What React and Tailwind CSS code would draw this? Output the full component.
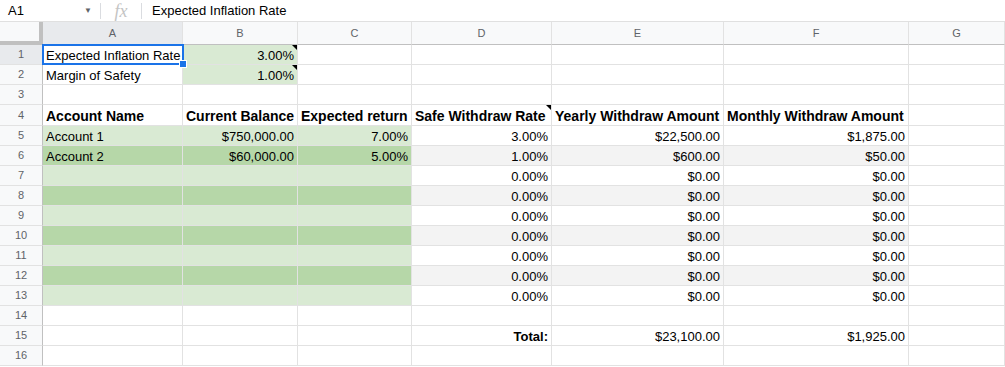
const cols = ["A", "B", "C", "D", "E", "F", "G"];
const widths = "grid-cols-[43px_140px_115px_114px_140px_172px_185px_1fr]";

const light = "bg-[#d9ead3]";
const dark = "bg-[#b6d7a8]";

function cellsFor(r) {
  // one entry per column A..G
  const empty = () => ({ text: "", align: "left", bold: false, bg: "", note: false });
  const row = cols.map(empty);
  if (r === 1) {
    row[0].text = "Expected Inflation Rate";
    row[1] = { text: "3.00%", align: "right", bg: light, note: true };
  }
  if (r === 2) {
    row[0].text = "Margin of Safety";
    row[1] = { text: "1.00%", align: "right", bg: light, note: true };
  }
  if (r === 4) {
    const h = ["Account Name", "Current Balance", "Expected return", "Safe Withdraw Rate", "Yearly Withdraw Amount", "Monthly Withdraw Amount"];
    h.forEach((t, i) => {
      row[i] = { text: t, align: "left", bold: true, big: true, bg: "", note: i === 3 };
    });
  }
  if (r >= 5 && r <= 13) {
    const green = r % 2 === 1 ? light : dark;
    const grey = r % 2 === 0 ? "bg-[#f3f3f3]" : "";
    row[0] = { text: "", align: "left", bg: green };
    row[1] = { text: "", align: "right", bg: green };
    row[2] = { text: "", align: "right", bg: green };
    row[3] = { text: "0.00%", align: "right", bg: grey };
    row[4] = { text: "$0.00", align: "right", bg: grey };
    row[5] = { text: "$0.00", align: "right", bg: grey };
    if (r === 5) {
      row[0].text = "Account 1";
      row[1].text = "$750,000.00";
      row[2].text = "7.00%";
      row[3].text = "3.00%";
      row[4].text = "$22,500.00";
      row[5].text = "$1,875.00";
    }
    if (r === 6) {
      row[0].text = "Account 2";
      row[1].text = "$60,000.00";
      row[2].text = "5.00%";
      row[3].text = "1.00%";
      row[4].text = "$600.00";
      row[5].text = "$50.00";
    }
  }
  if (r === 15) {
    row[3] = { text: "Total:", align: "right", bold: true, bg: "" };
    row[4] = { text: "$23,100.00", align: "right", bg: "" };
    row[5] = { text: "$1,925.00", align: "right", bg: "" };
  }
  return row;
}

function Cell({ c, h }) {
  return (
    <div
      className={`relative ${h} border-r border-b border-[#e2e2e2] px-[3px] pb-[2px] flex items-end overflow-hidden whitespace-nowrap text-black ${c.big ? "text-[14px]" : "text-[13px]"} ${c.bg || "bg-white"} ${c.align === "right" ? "justify-end" : "justify-start"} ${c.bold ? "font-bold" : ""}`}
    >
      <span className="leading-none">{c.text}</span>
      {c.note && (
        <span className="absolute top-0 right-0 w-0 h-0 border-t-[5px] border-l-[5px] border-t-black border-l-transparent" />
      )}
    </div>
  );
}

export default function App() {
  const rows = Array.from({ length: 16 }, (_, i) => i + 1);
  return (
    <div className="w-[1005px] h-[367px] overflow-hidden bg-white font-['Liberation_Sans',Arial,sans-serif]">
      {/* formula bar */}
      <div className="h-[22px] flex items-center border-b border-[#e0e0e0] text-[13px] text-black">
        <div className="w-[100px] flex items-center justify-between pl-2 pr-[8px]">
          <span>A1</span>
          <span className="text-[8px] text-[#5f6368]">▼</span>
        </div>
        <div className="w-px h-[16px] bg-[#dadce0]" />
        <div className="w-[40px] text-center text-[18px] italic text-[#c4c4c4] font-['Liberation_Serif',serif] leading-none">fx</div>
        <div className="w-px h-[16px] bg-[#dadce0]" />
        <span className="pl-[10px]">Expected Inflation Rate</span>
      </div>

      <div className={`relative grid ${widths}`}>
        {/* column header */}
        <div className="h-[23px] bg-[#f8f9fa] border-r-[4px] border-b-[4px] border-[#c0c0c0]" />
        {cols.map((l, i) => (
          <div
            key={l}
            className={`h-[23px] border-r border-b border-[#c0c0c0] border-r-[#e2e2e2] flex items-center justify-center text-[11px] text-[#5f6368] ${i === 0 ? "bg-[#e8eaed]" : "bg-[#f8f9fa]"}`}
          >
            {l}
          </div>
        ))}

        {rows.map((r) => {
          const h = r === 4 ? "h-[21px]" : "h-5";
          return [
            <div
              key={"h" + r}
              className={`${h} border-r border-b border-[#c0c0c0] border-b-[#e2e2e2] flex items-center justify-center text-[11px] text-[#5f6368] ${r === 1 ? "bg-[#e8eaed]" : "bg-[#f8f9fa]"}`}
            >
              {r}
            </div>,
            ...cellsFor(r).map((c, i) => <Cell key={r + "-" + i} c={c} h={h} />),
          ];
        })}

        {/* A1 selection */}
        <div className="absolute left-[42px] top-[22px] w-[142px] h-[21px] border-2 border-[#1a73e8] pointer-events-none">
          <div className="absolute -right-[5px] -bottom-[5px] w-[8px] h-[8px] bg-[#1a73e8] border border-white" />
        </div>
      </div>
    </div>
  );
}
